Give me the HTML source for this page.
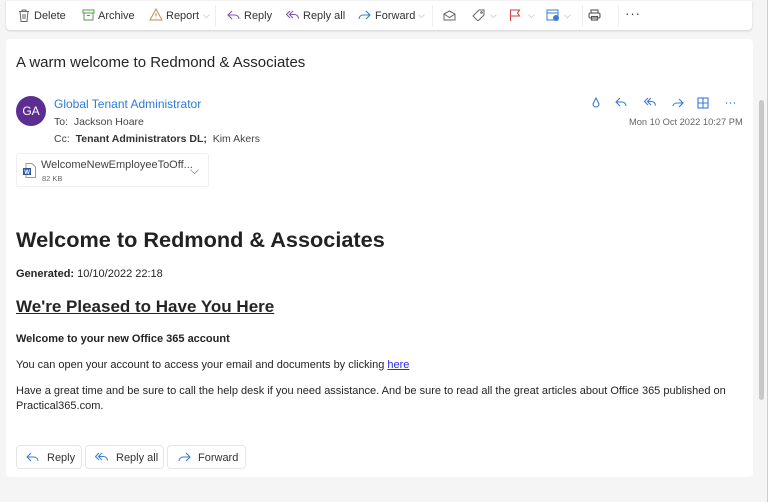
<!DOCTYPE html>
<html><head><style>
*{box-sizing:border-box;margin:0;padding:0}
body{width:768px;height:502px;background:#f5f5f5;font-family:"Liberation Sans",sans-serif;position:relative;overflow:hidden;color:#242424}
.tb{position:absolute;left:6px;top:1px;width:746px;height:29px;background:#fff;border-radius:0 0 4px 4px;box-shadow:0 1px 2px rgba(0,0,0,.15);font-size:11px;color:#333}
.tb span{position:absolute;top:9px;white-space:nowrap}
.sep{position:absolute;top:4px;width:1px;height:22px;background:#eee}
.card{position:absolute;left:6px;top:39px;width:747px;height:438px;background:#fff;border-radius:4px}
.sb{position:absolute;left:755px;top:0;width:13px;height:502px;background:#f5f5f5;border-right:1px solid #ccc}
.abs{position:absolute;white-space:nowrap}
.btn{position:absolute;top:445px;height:24px;border:1px solid #e6e6e6;border-radius:4px;font-size:11px;padding:6px 0 0 0;color:#333}
svg{position:absolute}
</style></head><body>
<div class="tb">
<svg style="left:12px;top:8px" width="12" height="13" viewBox="0 0 12 13" fill="none" stroke="#666" stroke-width="1"><path d="M1 2.5h10M4 2.5V1h4v1.5M2 2.5l1 10h6l1-10M5 5v5M7 5v5"/></svg>
<span style="left:28px">Delete</span>
<svg style="left:76px;top:8px" width="13" height="12" viewBox="0 0 13 12" fill="none" stroke="#5a9a4f" stroke-width="1"><rect x="1" y="1" width="11" height="3"/><path d="M2 4v7h9V4M5 6.5h3"/></svg>
<span style="left:92px">Archive</span>
<svg style="left:143px;top:7px" width="14" height="13" viewBox="0 0 14 13" fill="none" stroke="#b8915a" stroke-width="1"><path d="M7 1L13 12H1z M7 5v3.5M7 10v.5"/></svg>
<span style="left:160px">Report</span><span style="left:197px;color:#999;font-size:9px">⌵</span>
<div class="sep" style="left:209px"></div>
<svg style="left:221px;top:9px" width="13" height="10" viewBox="0 0 13 10" fill="none" stroke="#7a5aa8" stroke-width="1.1"><path d="M5 1L1 5l4 4M1 5h7a4 4 0 014 4"/></svg>
<span style="left:238px">Reply</span>
<svg style="left:280px;top:9px" width="14" height="10" viewBox="0 0 14 10" fill="none" stroke="#7a5aa8" stroke-width="1.1"><path d="M4 1L0.5 4.5 4 8M7 1L3.5 4.5 7 8M3.5 4.5h5a4 4 0 014 4"/></svg>
<span style="left:297px">Reply all</span>
<svg style="left:352px;top:9px" width="13" height="10" viewBox="0 0 13 10" fill="none" stroke="#3a7bd5" stroke-width="1.1"><path d="M8 1l4 4-4 4M12 5H5a4 4 0 00-4 4"/></svg>
<span style="left:369px">Forward</span><span style="left:412px;color:#999;font-size:9px">⌵</span>
<div class="sep" style="left:426px"></div>
<svg style="left:437px;top:9px" width="13" height="11" viewBox="0 0 13 11" fill="none" stroke="#666"><path d="M1 4l5.5-3L12 4v6H1zM1 4l5.5 3.5L12 4"/></svg>
<svg style="left:466px;top:8px" width="13" height="12" viewBox="0 0 13 12" fill="none" stroke="#666"><path d="M1 7l6-6h5v5l-6 6z"/><circle cx="9.5" cy="3.5" r=".8"/></svg><span style="left:484px;color:#999;font-size:9px">⌵</span>
<svg style="left:503px;top:8px" width="12" height="13" viewBox="0 0 12 13" fill="none" stroke="#c4444a" stroke-width="1.1"><path d="M1.5 12V1h9l-2 3 2 3h-9"/></svg><span style="left:522px;color:#999;font-size:9px">⌵</span>
<svg style="left:540px;top:8px" width="14" height="13" viewBox="0 0 14 13" fill="none" stroke="#3a7bd5"><rect x="1" y="1" width="11" height="10"/><path d="M1 4h11"/><circle cx="10" cy="9" r="2.5" fill="#3a7bd5"/></svg><span style="left:558px;color:#999;font-size:9px">⌵</span>
<div class="sep" style="left:576px"></div>
<svg style="left:582px;top:8px" width="13" height="12" viewBox="0 0 13 12" fill="none" stroke="#555" stroke-width="1.1"><rect x="3" y="1" width="7" height="3"/><rect x="1" y="4" width="11" height="5" rx="1.5"/><rect x="3.5" y="7.5" width="6" height="3.5"/></svg>
<div class="sep" style="left:612px"></div>
<span style="left:619px;top:5px;font-size:13px;letter-spacing:1px">···</span>
</div>
<div class="card">
<div class="abs" style="left:10px;top:15px;font-size:15px;color:#242424">A warm welcome to Redmond &amp; Associates</div>
<div class="abs" style="left:10px;top:57px;width:30px;height:30px;border-radius:50%;background:#5c2e91;color:#fff;font-size:12px;text-align:center;line-height:30px">GA</div>
<div class="abs" style="left:48px;top:58px;font-size:12px;color:#2b7cd3">Global Tenant Administrator</div>
<div class="abs" style="left:48px;top:77px;font-size:10.5px;color:#444">To:&nbsp; Jackson Hoare</div>
<div class="abs" style="left:48px;top:94px;font-size:10.5px;color:#444">Cc:&nbsp; <b style="color:#333;font-weight:600">Tenant Administrators DL;</b>&nbsp; Kim Akers</div>
<div class="abs" style="left:623px;top:78px;font-size:9.3px;color:#666">Mon 10 Oct 2022 10:27 PM</div>
<svg style="left:584px;top:57px" width="150" height="14" viewBox="0 0 150 14" fill="none" stroke="#3a7bd5" stroke-width="1.1"><path d="M6 2l-3 6a3 3 0 006 0z"/><path d="M30 2l-4 4 4 4M26 6h6a4 4 0 014 4"/><path d="M58 2l-3.5 3.5L58 9M61 2l-3.5 3.5L61 9M57.5 5.5h4a4 4 0 014 4"/><path d="M89 3l4 4-4 4M93 7h-6a4 4 0 00-4 3"/><rect x="108" y="2" width="10" height="10"/><path d="M108 7h10M113 2v10"/><path d="M136 7h1M140 7h1M144 7h1" stroke-width="1.6"/></svg>
<div class="abs" style="left:10px;top:114px;width:193px;height:34px;border:1px solid #eee;border-radius:3px"></div>
<svg style="left:17px;top:124px" width="13" height="15" viewBox="0 0 13 15"><path d="M3 .5h6l3.5 3.5v10.5H3z" fill="#fff" stroke="#999"/><rect x="0" y="5" width="8" height="7" fill="#2b579a"/><text x="1.3" y="10.8" font-size="6" fill="#fff" font-family="Liberation Sans" font-weight="bold">W</text></svg>
<div class="abs" style="left:35px;top:120px;font-size:11px;color:#444">WelcomeNewEmployeeToOff...</div>
<div class="abs" style="left:36px;top:135px;font-size:7.5px;color:#666">82 KB</div>
<div class="abs" style="left:184px;top:124px;font-size:12px;color:#666">⌵</div>
<div class="abs" style="left:10px;top:188px;font-size:21.7px;font-weight:bold;color:#222">Welcome to Redmond &amp; Associates</div>
<div class="abs" style="left:10px;top:229px;font-size:11px"><b>Generated:</b> 10/10/2022 22:18</div>
<div class="abs" style="left:10px;top:258px;font-size:17px;font-weight:bold;text-decoration:underline">We're Pleased to Have You Here</div>
<div class="abs" style="left:10px;top:294px;font-size:11px;font-weight:bold">Welcome to your new Office 365 account</div>
<div class="abs" style="left:10px;top:320px;font-size:11px">You can open your account to access your email and documents by clicking <a style="color:#2b2be0;text-decoration:underline">here</a></div>
<div class="abs" style="left:10px;top:345px;font-size:11px;line-height:15px">Have a great time and be sure to call the help desk if you need assistance. And be sure to read all the great articles about Office 365 published on<br>Practical365.com.</div>
</div>
<div class="btn" style="left:16px;width:66px"><svg style="left:9px;top:6px" width="13" height="10" viewBox="0 0 13 10" fill="none" stroke="#3a7bd5"><path d="M5 1L1 5l4 4M1 5h7a4 4 0 014 4"/></svg><span style="position:absolute;left:30px">Reply</span></div>
<div class="btn" style="left:85px;width:79px"><svg style="left:9px;top:6px" width="14" height="10" viewBox="0 0 14 10" fill="none" stroke="#3a7bd5"><path d="M4 1L.5 4.5 4 8M7 1L3.5 4.5 7 8M3.5 4.5h5a4 4 0 014 4"/></svg><span style="position:absolute;left:30px">Reply all</span></div>
<div class="btn" style="left:167px;width:79px"><svg style="left:10px;top:6px" width="13" height="10" viewBox="0 0 13 10" fill="none" stroke="#3a7bd5"><path d="M8 1l4 4-4 4M12 5H5a4 4 0 00-4 4"/></svg><span style="position:absolute;left:30px">Forward</span></div>
<div class="sb"><div style="position:absolute;left:4px;top:100px;width:5px;height:300px;background:#c8c8c8;border-radius:3px"></div></div>
</body></html>
